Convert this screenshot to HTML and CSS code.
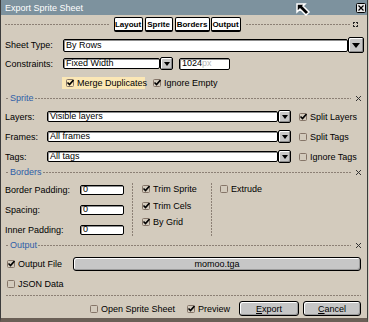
FILE: index.html
```html
<!DOCTYPE html>
<html lang="en">
<head>
    <meta charset="UTF-8">
    <title>Export Sprite Sheet</title>
    <link rel="stylesheet" href="styles.css">
</head>
<body>
    <div class="window">
        <div class="titlebar">
            <span class="title">Export Sprite Sheet</span>
            <span class="close">
                <svg width="10" height="10" viewBox="0 0 10 10"><rect x="0.5" y="0.5" width="9" height="9" rx="1" fill="#e8e8e8" stroke="#000"/><path d="M2.5 2.5 L7.5 7.5 M7.5 2.5 L2.5 7.5" stroke="#000" stroke-width="1.2"/></svg>
            </span>
        </div>

        <svg class="cursor" width="15" height="15" viewBox="0 0 15 15">
            <path d="M1 1 L9 1 L7 3 L13 9 L10 12 L4 6 L1 9 Z" fill="#000" stroke="#fff" stroke-width="1.5" stroke-linejoin="miter"/>
        </svg>

        <div class="body">
            <div class="tabs-row">
                <span class="dash"></span>
                <div class="tabs">
                    <span class="tab tab-layout">Layout</span>
                    <span class="tab tab-sprite">Sprite</span>
                    <span class="tab tab-borders">Borders</span>
                    <span class="tab tab-output">Output</span>
                </div>
                <span class="dash dash-right"></span>
                <svg class="expand" width="5" height="5" viewBox="0 0 5 5"><path d="M0 0h2v1H1v1H0z M3 0h2v2H4V1H3z M0 3h1v1h1v1H0z M4 3h1v2H3V4h1z" fill="#222"/></svg>
            </div>

            <div class="row row-sheet">
                <span class="label label-top">Sheet Type:</span>
                <div class="select select-big">
                    <span class="field">By Rows</span>
                    <span class="sel-btn big"></span>
                </div>
            </div>

            <div class="row row-constraints">
                <span class="label label-top">Constraints:</span>
                <div class="select select-small">
                    <span class="field">Fixed Width</span>
                    <span class="sel-btn"></span>
                </div>
                <span class="field px-field">1024<span class="unit">px</span></span>
            </div>

            <div class="row row-merge">
                <span class="check highlight">
                    <svg class="cb" width="8" height="8" viewBox="0 0 8 8"><rect x="0.5" y="0.5" width="7" height="7" rx="1" fill="none" stroke="#857568"/><path d="M1.5 3.5 L3.5 5.5 L7.5 1" fill="none" stroke="#000" stroke-width="1.6"/></svg>
                    Merge Duplicates
                </span>
                <span class="check ignore-empty">
                    <svg class="cb" width="8" height="8" viewBox="0 0 8 8"><rect x="0.5" y="0.5" width="7" height="7" rx="1" fill="none" stroke="#857568"/><path d="M1.5 3.5 L3.5 5.5 L7.5 1" fill="none" stroke="#000" stroke-width="1.6"/></svg>
                    Ignore Empty
                </span>
            </div>

            <div class="section-head head-sprite">
                <span class="lead"></span>
                <span class="head-text">Sprite</span>
                <span class="dash"></span>
                <svg class="x" width="5" height="5" viewBox="0 0 5 5"><path d="M0 0 L5 5 M5 0 L0 5" stroke="#333" stroke-width="1"/></svg>
            </div>

            <div class="sprite-grid">
                <span class="label">Layers:</span>
                <div class="select select-mid">
                    <span class="field">Visible layers</span>
                    <span class="sel-btn"></span>
                </div>
                <span class="check">
                    <svg class="cb" width="8" height="8" viewBox="0 0 8 8"><rect x="0.5" y="0.5" width="7" height="7" rx="1" fill="none" stroke="#857568"/><path d="M1.5 3.5 L3.5 5.5 L7.5 1" fill="none" stroke="#000" stroke-width="1.6"/></svg>
                    Split Layers
                </span>

                <span class="label">Frames:</span>
                <div class="select select-mid">
                    <span class="field">All frames</span>
                    <span class="sel-btn"></span>
                </div>
                <span class="check">
                    <svg class="cb" width="8" height="8" viewBox="0 0 8 8"><rect x="0.5" y="0.5" width="7" height="7" rx="1" fill="none" stroke="#857568"/></svg>
                    Split Tags
                </span>

                <span class="label">Tags:</span>
                <div class="select select-mid">
                    <span class="field">All tags</span>
                    <span class="sel-btn"></span>
                </div>
                <span class="check">
                    <svg class="cb" width="8" height="8" viewBox="0 0 8 8"><rect x="0.5" y="0.5" width="7" height="7" rx="1" fill="none" stroke="#857568"/></svg>
                    Ignore Tags
                </span>
            </div>

            <div class="section-head head-borders">
                <span class="lead"></span>
                <span class="head-text">Borders</span>
                <span class="dash"></span>
                <svg class="x" width="5" height="5" viewBox="0 0 5 5"><path d="M0 0 L5 5 M5 0 L0 5" stroke="#333" stroke-width="1"/></svg>
            </div>

            <div class="borders">
                <div class="pad-grid">
                    <span class="label">Border Padding:</span>
                    <span class="field num">0</span>
                    <span class="label">Spacing:</span>
                    <span class="field num">0</span>
                    <span class="label">Inner Padding:</span>
                    <span class="field num">0</span>
                </div>
                <span class="vline"></span>
                <div class="trim-col">
                    <span class="check">
                        <svg class="cb" width="8" height="8" viewBox="0 0 8 8"><rect x="0.5" y="0.5" width="7" height="7" rx="1" fill="none" stroke="#857568"/><path d="M1.5 3.5 L3.5 5.5 L7.5 1" fill="none" stroke="#000" stroke-width="1.6"/></svg>
                        Trim Sprite
                    </span>
                    <span class="check">
                        <svg class="cb" width="8" height="8" viewBox="0 0 8 8"><rect x="0.5" y="0.5" width="7" height="7" rx="1" fill="none" stroke="#857568"/><path d="M1.5 3.5 L3.5 5.5 L7.5 1" fill="none" stroke="#000" stroke-width="1.6"/></svg>
                        Trim Cels
                    </span>
                    <span class="check">
                        <svg class="cb" width="8" height="8" viewBox="0 0 8 8"><rect x="0.5" y="0.5" width="7" height="7" rx="1" fill="none" stroke="#857568"/><path d="M1.5 3.5 L3.5 5.5 L7.5 1" fill="none" stroke="#000" stroke-width="1.6"/></svg>
                        By Grid
                    </span>
                </div>
                <span class="vline"></span>
                <div class="extrude-col">
                    <span class="check">
                        <svg class="cb" width="8" height="8" viewBox="0 0 8 8"><rect x="0.5" y="0.5" width="7" height="7" rx="1" fill="none" stroke="#857568"/></svg>
                        Extrude
                    </span>
                </div>
            </div>

            <div class="section-head head-output">
                <span class="lead"></span>
                <span class="head-text">Output</span>
                <span class="dash"></span>
                <svg class="x" width="5" height="5" viewBox="0 0 5 5"><path d="M0 0 L5 5 M5 0 L0 5" stroke="#333" stroke-width="1"/></svg>
            </div>

            <div class="row row-file">
                <span class="check file-check">
                    <svg class="cb" width="8" height="8" viewBox="0 0 8 8"><rect x="0.5" y="0.5" width="7" height="7" rx="1" fill="none" stroke="#857568"/><path d="M1.5 3.5 L3.5 5.5 L7.5 1" fill="none" stroke="#000" stroke-width="1.6"/></svg>
                    Output File
                </span>
                <span class="btn file-btn">momoo.tga</span>
            </div>

            <div class="row row-json">
                <span class="check">
                    <svg class="cb" width="8" height="8" viewBox="0 0 8 8"><rect x="0.5" y="0.5" width="7" height="7" rx="1" fill="none" stroke="#857568"/></svg>
                    JSON Data
                </span>
            </div>

            <span class="hsep"></span>

            <div class="row row-bottom">
                <span class="check open-check">
                    <svg class="cb" width="8" height="8" viewBox="0 0 8 8"><rect x="0.5" y="0.5" width="7" height="7" rx="1" fill="none" stroke="#857568"/></svg>
                    Open Sprite Sheet
                </span>
                <span class="check preview-check">
                    <svg class="cb" width="8" height="8" viewBox="0 0 8 8"><rect x="0.5" y="0.5" width="7" height="7" rx="1" fill="none" stroke="#857568"/><path d="M1.5 3.5 L3.5 5.5 L7.5 1" fill="none" stroke="#000" stroke-width="1.6"/></svg>
                    Preview
                </span>
                <span class="btn export-btn"><u>E</u>xport</span>
                <span class="btn cancel-btn"><u>C</u>ancel</span>
            </div>
        </div>
    </div>
</body>
</html>
```

FILE: styles.css
```css
body {
    margin: 0;
    background: #d3cbbd;
    font-family: 'Liberation Sans', Arial, sans-serif;
    font-size: 9px;
    color: #000;
}
.window {
    position: relative;
    width: 366px;
    height: 318px;
    border-left: 1px solid #3c3c3c;
    border-right: 1px solid #3c3c3c;
    border-bottom: 4px solid #6a5f56;
    background: #d3cbbd;
}
.titlebar {
    height: 15px;
    background: #7d929e;
    display: flex;
    align-items: center;
    padding-left: 4px;
    color: #fff;
}
.title {
    flex: 1;
}
.close {
    display: flex;
    margin-right: 1px;
}
.cursor {
    position: absolute;
    left: 295px;
    top: 3px;
}
.body {
    display: flex;
    flex-direction: column;
    padding: 0 3px 0 4px;
}

/* dashed separators */
.dash {
    flex: 1;
    height: 1px;
    background: repeating-linear-gradient(to right, #8c8075 0 2px, transparent 2px 3px);
}
.vline {
    width: 1px;
    background: repeating-linear-gradient(to bottom, #8c8075 0 2px, transparent 2px 3px);
}
.hsep {
    display: block;
    height: 1px;
    margin: 6px 3px 0 1px;
    background: repeating-linear-gradient(to right, #8c8075 0 2px, transparent 2px 3px);
}

/* tabs */
.tabs-row {
    display: flex;
    align-items: center;
    height: 15px;
    margin-top: 2px;
}
.tabs {
    display: flex;
    gap: 1px;
    margin: 0 5px 0 4px;
}
.tab {
    box-sizing: border-box;
    height: 15px;
    border: 1px solid #000;
    border-bottom-width: 2px;
    border-radius: 2px;
    background: #fff;
    font-size: 8px;
    font-weight: bold;
    display: flex;
    align-items: center;
    justify-content: center;
    white-space: nowrap;
}
.tab-layout { width: 29px; }
.tab-sprite { width: 28px; margin-left: 1px; }
.tab-borders { width: 35px; margin-left: 1px; }
.tab-output { width: 30px; }
.expand {
    margin: 0 6px 0 3px;
}

/* rows */
.row {
    display: flex;
    align-items: center;
}
.label {
    white-space: nowrap;
}
.label-top {
    width: 58px;
}
.row-sheet {
    height: 16px;
    margin-top: 5px;
}
.row-constraints {
    height: 13px;
    margin-top: 4px;
}
.row-merge {
    height: 12px;
    margin-top: 7px;
}

/* select boxes */
.select {
    display: flex;
    align-items: center;
}
.select-big { flex: 1; }
.select-small { width: 110px; }
.select-mid { width: 244px; }
.field {
    box-sizing: border-box;
    height: 11px;
    background: #fff;
    border: 1px solid #000;
    border-radius: 2px;
    box-shadow: inset 1px 1px 0 #8f8f8f;
    padding: 0 2px;
    display: flex;
    align-items: center;
    line-height: 1;
    white-space: nowrap;
}
.select .field { flex: 1; }
.select-big .field { height: 13px; }
.sel-btn {
    box-sizing: border-box;
    width: 13px;
    height: 13px;
    background: #c6c6c6;
    border: 1px solid #000;
    border-radius: 2px;
    box-shadow: inset 1px 1px 0 #fff, inset -1px -1px 0 #8a8a8a;
    display: flex;
    align-items: center;
    justify-content: center;
}
.sel-btn::after {
    content: "";
    border-left: 3.5px solid transparent;
    border-right: 3.5px solid transparent;
    border-top: 4px solid #000;
}
.sel-btn.big {
    width: 16px;
    height: 16px;
}
.sel-btn.big::after {
    border-left-width: 4.5px;
    border-right-width: 4.5px;
    border-top-width: 5px;
}
.px-field {
    width: 51px;
    height: 12px;
    margin-left: 6px;
}
.unit {
    color: #b8b8b8;
}

/* checkboxes */
.check {
    display: flex;
    align-items: center;
    white-space: nowrap;
}
.cb {
    margin-right: 3px;
    flex-shrink: 0;
}
.highlight {
    height: 12px;
    width: 79px;
    padding-left: 4px;
    margin-left: 57px;
    background: #fbe7b5;
}
.ignore-empty {
    margin-left: 8px;
}

/* section headings */
.section-head {
    display: flex;
    align-items: center;
    height: 10px;
    color: #2f5ea8;
}
.section-head .lead {
    width: 2px;
    height: 1px;
    margin: 0 2px 0 1px;
    background: #8c8075;
}
.section-head .head-text {
    margin-right: 1px;
}
.section-head .x {
    margin: 0 3px 0 5px;
}
.head-sprite { margin-top: 4px; }
.head-borders { margin-top: 4px; }
.head-output { margin-top: 3px; }

/* sprite section */
.sprite-grid {
    display: grid;
    grid-template-columns: 42px 244px 1fr;
    grid-auto-rows: 13px;
    row-gap: 7px;
    align-items: center;
    margin-top: 7px;
}
.sprite-grid .check {
    margin-left: 8px;
}

/* borders section */
.borders {
    display: flex;
    height: 54px;
    margin-top: 6px;
}
.pad-grid {
    display: grid;
    grid-template-columns: 75px 44px;
    grid-auto-rows: 13px;
    row-gap: 7px;
    align-items: center;
    margin-right: 8px;
}
.num {
    height: 10px;
}
.trim-col {
    width: 69px;
    padding-left: 9px;
    display: flex;
    flex-direction: column;
    gap: 4.5px;
}
.trim-col .check,
.extrude-col .check {
    height: 12px;
}
.extrude-col {
    padding-left: 8px;
}

/* output section */
.row-file {
    height: 14px;
    margin-top: 7px;
}
.file-check {
    width: 66px;
    margin-left: 2px;
}
.btn {
    box-sizing: border-box;
    height: 14px;
    background: #c6c6c6;
    border: 1px solid #000;
    border-radius: 3px;
    box-shadow: inset 1px 1px 0 #fff, inset -1px -1px 0 #9a9a9a;
    display: flex;
    align-items: center;
    justify-content: center;
}
.file-btn {
    flex: 1;
    margin-right: 3px;
}
.row-json {
    height: 11px;
    margin-top: 7px;
    padding-left: 2px;
}
.row-bottom {
    height: 15px;
    margin-top: 5px;
}
.open-check {
    margin-left: 85px;
}
.preview-check {
    margin-left: 12px;
}
.export-btn {
    width: 60px;
    height: 15px;
    margin-left: 9px;
}
.cancel-btn {
    width: 58px;
    height: 15px;
    margin-left: 4px;
}
```
